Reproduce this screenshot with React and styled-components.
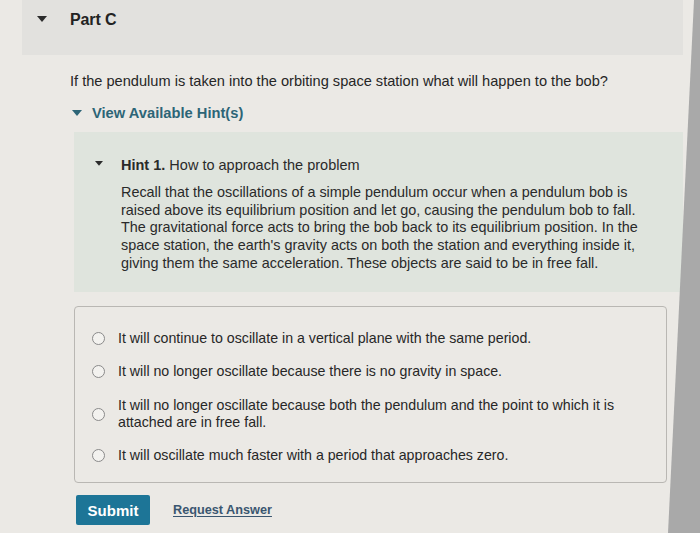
import React from 'react'
import styled, { createGlobalStyle } from 'styled-components'

const GlobalStyle = createGlobalStyle`
    html, body {
        margin: 0;
        padding: 0;
        background: #ebe9e5;
        font-family: "Liberation Sans", Arial, sans-serif;
        color: #2a2a2a;
        overflow: hidden;
    }
`

const Page = styled.div`
    position: relative;
    width: 700px;
    height: 533px;
    padding-left: 22px;
    box-sizing: border-box;
`

const Bezel = styled.div`
    position: absolute;
    inset: 0;
    pointer-events: none;
    background: linear-gradient(90deg, #5a5a5a 0 5px, #a9a9a9 5px 100%);
    clip-path: polygon(694px 0, 700px 0, 700px 533px, 668px 533px);
`

const PartHeader = styled.div`
    width: 661px;
    height: 55px;
    background: #e2e1de;
    display: flex;
    align-items: flex-start;
    padding: 11px 0 0 15px;
    box-sizing: border-box;
    font-size: 16px;
    font-weight: 700;
    color: #232323;
    letter-spacing: -0.1px;
    .caret {
        margin: 5px 23px 0 0;
    }
`

const Body = styled.div`
    padding-left: 48px;
`

const Question = styled.p`
    margin: 17px 0 0;
    font-size: 14.6px;
    line-height: 18px;
    color: #262626;
`

const HintToggle = styled.div`
    display: flex;
    align-items: center;
    margin: 15px 0 0 2px;
    font-size: 14.7px;
    font-weight: 700;
    color: #2d6577;
    svg {
        margin-right: 10px;
    }
`

const HintBox = styled.div`
    margin: 11px 0 0 4px;
    width: 609px;
    height: 160px;
    background: #dfe4dd;
    box-sizing: border-box;
    padding: 24px 20px 0 21px;
    display: flex;
    align-items: flex-start;
    .caret {
        margin: 5px 18px 0 0;
        flex-shrink: 0;
    }
`

const HintContent = styled.div`
    font-size: 14.5px;
    color: #2a2a2a;
    h4 {
        margin: 0;
        font-size: 14.5px;
        font-weight: 400;
        line-height: 18px;
    }
    b {
        font-weight: 700;
    }
    p {
        margin: 10px 0 0;
        font-size: 14.4px;
        line-height: 17.7px;
        white-space: nowrap;
    }
`

const Answers = styled.div`
    margin: 14px 0 0 4px;
    width: 593px;
    height: 177px;
    border: 1px solid #b9b7b3;
    border-radius: 4px;
    box-sizing: border-box;
    padding: 23px 0 0 17px;
    display: flex;
    flex-direction: column;
`

const Option = styled.label`
    display: flex;
    align-items: center;
    font-size: 14.2px;
    line-height: 17px;
    color: #272727;
    min-height: ${p => (p.tall ? '36px' : '17px')};
    margin-bottom: ${p => (p.tall ? '15px' : '16px')};
`

const OptionText = styled.span`
    width: 510px;
`

const Radio = styled.span`
    flex-shrink: 0;
    width: 13px;
    height: 13px;
    border: 1.5px solid #8a8a8a;
    border-radius: 50%;
    background: #f3f2ef;
    margin-right: 13px;
    box-sizing: border-box;
`

const Actions = styled.div`
    display: flex;
    align-items: center;
    margin: 12px 0 0 6px;
`

const SubmitButton = styled.button`
    width: 74px;
    height: 30px;
    background: #1d7597;
    border: none;
    border-radius: 2px;
    color: #fff;
    font-family: inherit;
    font-size: 15px;
    font-weight: 700;
    padding: 0;
`

const RequestLink = styled.a`
    margin-left: 23px;
    font-size: 12.7px;
    font-weight: 700;
    color: #3a5670;
    text-decoration: underline;
    text-underline-offset: 2px;
`

const Caret = ({ color = '#2c2c2c', size = 10 }) => (
    <svg className='caret' width={size} height={size * 0.6} viewBox='0 0 10 6'>
        <path d='M0 0 L10 0 L5 6 Z' fill={color} />
    </svg>
)

const hintLines = [
    'Recall that the oscillations of a simple pendulum occur when a pendulum bob is',
    'raised above its equilibrium position and let go, causing the pendulum bob to fall.',
    'The gravitational force acts to bring the bob back to its equilibrium position. In the',
    "space station, the earth's gravity acts on both the station and everything inside it,",
    'giving them the same acceleration. These objects are said to be in free fall.',
]

const options = [
    { text: 'It will continue to oscillate in a vertical plane with the same period.' },
    { text: 'It will no longer oscillate because there is no gravity in space.' },
    { text: 'It will no longer oscillate because both the pendulum and the point to which it is attached are in free fall.', tall: true },
    { text: 'It will oscillate much faster with a period that approaches zero.' },
]

const App = () => {
    return (
        <Page>
            <GlobalStyle />
            <PartHeader>
                <Caret />
                Part C
            </PartHeader>
            <Body>
                <Question>
                    If the pendulum is taken into the orbiting space station what will happen to the bob?
                </Question>
                <HintToggle>
                    <Caret color='#2d6577' />
                    View Available Hint(s)
                </HintToggle>
                <HintBox>
                    <Caret size={8} />
                    <HintContent>
                        <h4><b>Hint 1.</b> How to approach the problem</h4>
                        <p>
                            {hintLines.map((line, i) => (
                                <React.Fragment key={i}>
                                    {line}
                                    {i < hintLines.length - 1 && <br />}
                                </React.Fragment>
                            ))}
                        </p>
                    </HintContent>
                </HintBox>
                <Answers>
                    {options.map((o, i) => (
                        <Option key={i} tall={o.tall}>
                            <Radio />
                            <OptionText>{o.text}</OptionText>
                        </Option>
                    ))}
                </Answers>
                <Actions>
                    <SubmitButton>Submit</SubmitButton>
                    <RequestLink href='#'>Request Answer</RequestLink>
                </Actions>
            </Body>
            <Bezel />
        </Page>
    )
}

export default App
